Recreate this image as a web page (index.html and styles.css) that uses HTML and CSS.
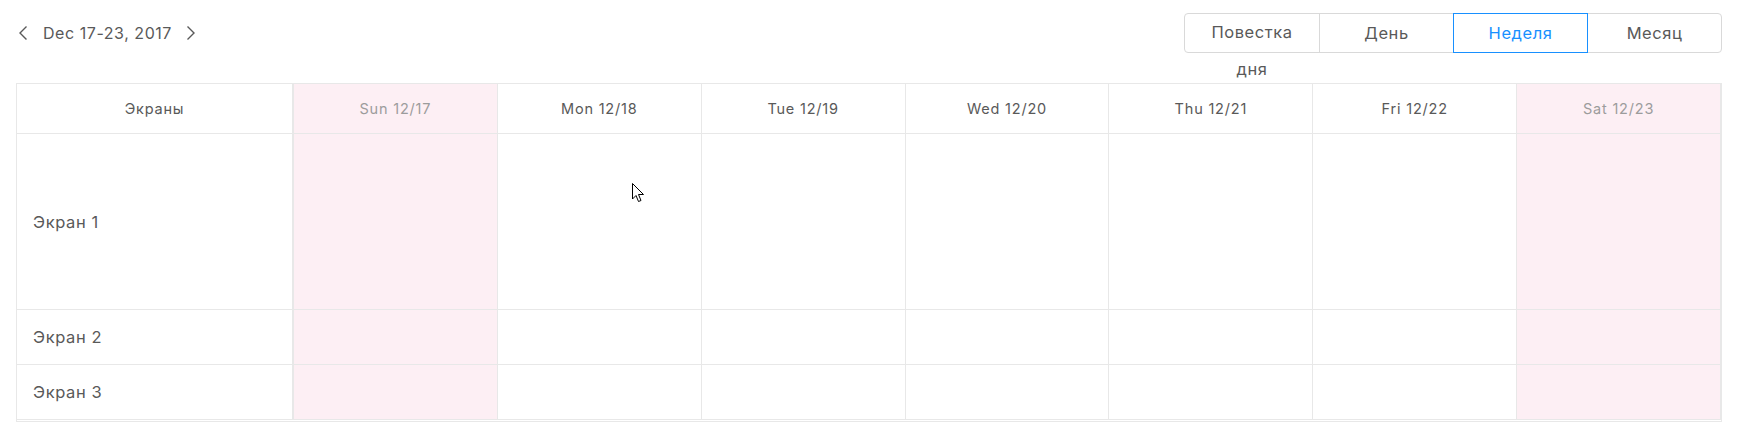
FILE: index.html
```html
<!DOCTYPE html>
<html lang="ru">
<head>
<meta charset="utf-8">
<title>Calendar</title>
<link rel="stylesheet" href="styles.css">
</head>
<body>
<div class="page">
  <div class="toolbar">
    <div class="nav">
      <span class="arrow prev">
        <svg width="12" height="16" viewBox="0 0 12 16"><path d="M9.5 1.5 L3 8 L9.5 14.5" fill="none" stroke="#595959" stroke-width="1.4"/></svg>
      </span>
      <span class="range">Dec 17-23, 2017</span>
      <span class="arrow next">
        <svg width="12" height="16" viewBox="0 0 12 16"><path d="M2.5 1.5 L9 8 L2.5 14.5" fill="none" stroke="#595959" stroke-width="1.4"/></svg>
      </span>
    </div>
    <div class="views">
      <button class="view first">Повестка дня</button>
      <button class="view">День</button>
      <button class="view active">Неделя</button>
      <button class="view last">Месяц</button>
    </div>
  </div>

  <div class="cal">
    <div class="cell head res">Экраны</div>
    <div class="cell head weekend">Sun 12/17</div>
    <div class="cell head">Mon 12/18</div>
    <div class="cell head">Tue 12/19</div>
    <div class="cell head">Wed 12/20</div>
    <div class="cell head">Thu 12/21</div>
    <div class="cell head">Fri 12/22</div>
    <div class="cell head weekend">Sat 12/23</div>

    <div class="cell res label">Экран 1</div>
    <div class="cell weekend"></div>
    <div class="cell"></div>
    <div class="cell"></div>
    <div class="cell"></div>
    <div class="cell"></div>
    <div class="cell"></div>
    <div class="cell weekend"></div>

    <div class="cell res label">Экран 2</div>
    <div class="cell weekend"></div>
    <div class="cell"></div>
    <div class="cell"></div>
    <div class="cell"></div>
    <div class="cell"></div>
    <div class="cell"></div>
    <div class="cell weekend"></div>

    <div class="cell res label">Экран 3</div>
    <div class="cell weekend"></div>
    <div class="cell"></div>
    <div class="cell"></div>
    <div class="cell"></div>
    <div class="cell"></div>
    <div class="cell"></div>
    <div class="cell weekend"></div>
  </div>

  <svg class="cursor" width="13" height="20" viewBox="0 0 13 20">
    <path d="M0.5 0.5 L0.5 16 L4 12.5 L6.5 18.5 L9 17.5 L6.5 11.5 L11.5 11.5 Z" fill="#fff" stroke="#000" stroke-width="1"/>
  </svg>
</div>
</body>
</html>
```

FILE: styles.css
```css
html, body {
  margin: 0;
  padding: 0;
  background: #fff;
}

body {
  font-family: "Inter", "Open Sans", sans-serif;
  color: #595959;
}

.page {
  position: relative;
  width: 1706px;
  padding: 0 16px;
}

.toolbar {
  height: 83px;
  display: flex;
  justify-content: space-between;
  align-items: flex-start;
}

.nav {
  display: flex;
  align-items: center;
  height: 40px;
  margin-top: 13px;
}

.arrow {
  display: flex;
  align-items: center;
}

.arrow.prev {
  margin-left: 1px;
  margin-right: 14px;
}

.arrow.next {
  margin-left: 13px;
}

.range {
  font-size: 16px;
  letter-spacing: 0.55px;
  color: #595959;
}

.views {
  display: flex;
  margin-top: 13px;
}

.view {
  width: 135px;
  height: 40px;
  box-sizing: border-box;
  border: 1px solid #d9d9d9;
  margin-left: -1px;
  background: #fff;
  font-family: inherit;
  font-size: 16.5px;
  letter-spacing: 0.55px;
  line-height: 37px;
  color: #595959;
  padding: 0 16px;
  overflow: visible;
  display: block;
  white-space: normal;
}

.view.first {
  margin-left: 0;
  border-radius: 4px 0 0 4px;
  width: 136px;
}

.view.last {
  border-radius: 0 4px 4px 0;
}

.view.active {
  border-color: #1890ff;
  color: #1890ff;
  position: relative;
  z-index: 1;
}

.cal {
  display: grid;
  grid-template-columns: 277px repeat(7, 1fr);
  grid-template-rows: 50px 176px 55px 55px;
  border: 1px solid #e8e8e8;
  padding-bottom: 1px;
  box-sizing: border-box;
  width: 1706px;
}

.cell {
  border-right: 1px solid #e8e8e8;
  border-bottom: 1px solid #e8e8e8;
  box-sizing: border-box;
}

.cell.res {
  border-right: 2px solid #e8e8e8;
}

.head {
  display: flex;
  align-items: center;
  justify-content: center;
  font-size: 14.5px;
  letter-spacing: 0.8px;
  color: #595959;
}

.head.weekend {
  color: #9c9c9c;
}

.weekend {
  background: #fdeff4;
}

.label {
  display: flex;
  align-items: center;
  padding-left: 16px;
  font-size: 16.5px;
  letter-spacing: 0.6px;
  color: #595959;
}

.cursor {
  position: absolute;
  left: 632px;
  top: 183px;
}
```
